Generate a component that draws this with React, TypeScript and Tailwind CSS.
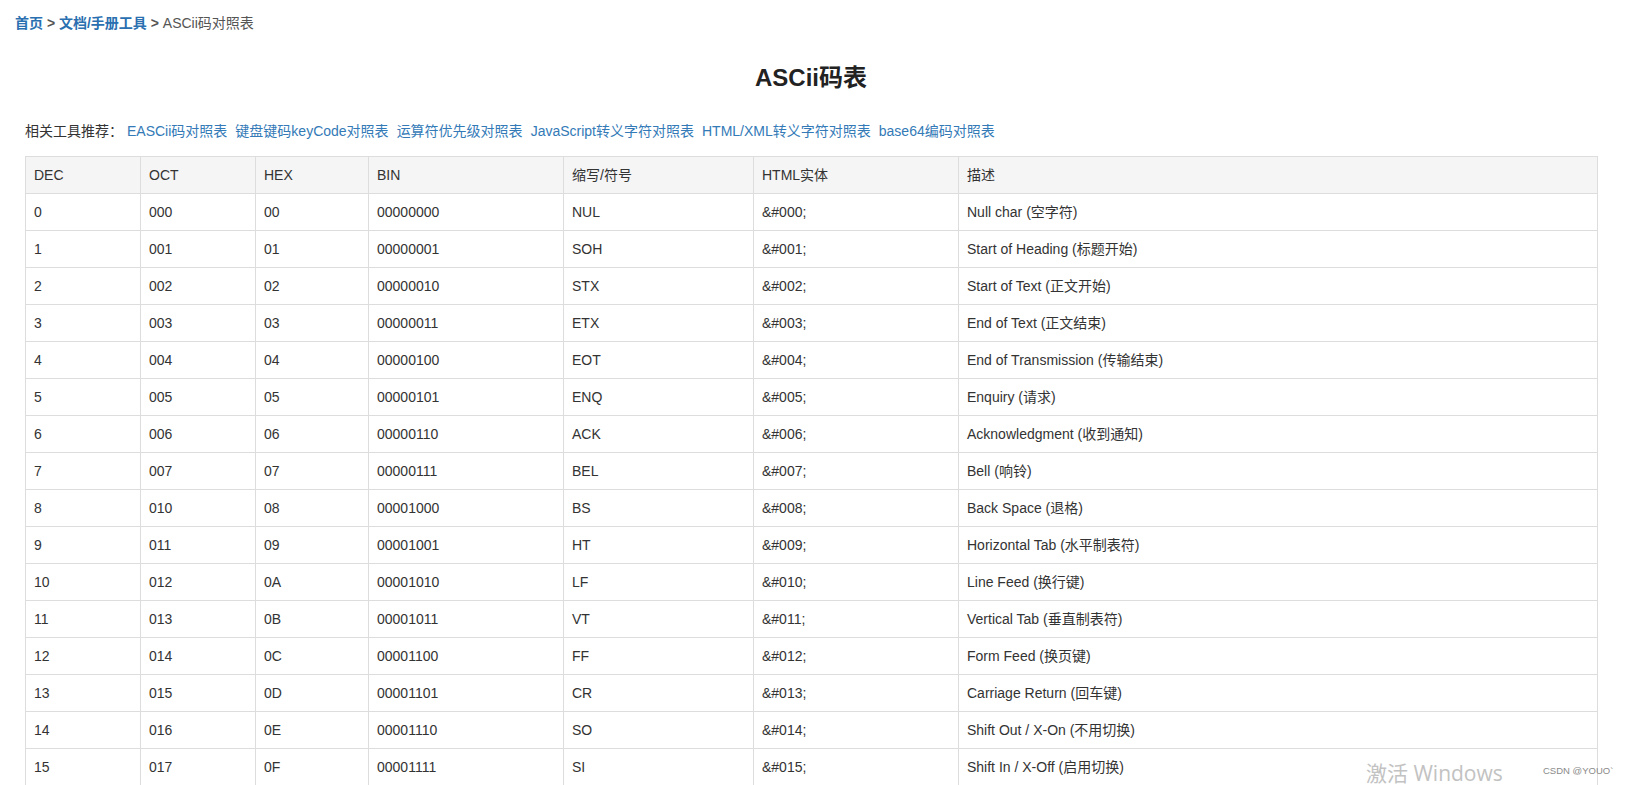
import React from 'react';

const descs = [
  'Null char (空字符)',
  'Start of Heading (标题开始)',
  'Start of Text (正文开始)',
  'End of Text (正文结束)',
  'End of Transmission (传输结束)',
  'Enquiry (请求)',
  'Acknowledgment (收到通知)',
  'Bell (响铃)',
  'Back Space (退格)',
  'Horizontal Tab (水平制表符)',
  'Line Feed (换行键)',
  'Vertical Tab (垂直制表符)',
  'Form Feed (换页键)',
  'Carriage Return (回车键)',
  'Shift Out / X-On (不用切换)',
  'Shift In / X-Off (启用切换)',
];

const abbrs = ['NUL', 'SOH', 'STX', 'ETX', 'EOT', 'ENQ', 'ACK', 'BEL', 'BS', 'HT', 'LF', 'VT', 'FF', 'CR', 'SO', 'SI'];

const rows = abbrs.map((abbr, i) => ({
  dec: String(i),
  oct: i.toString(8).padStart(3, '0'),
  hex: i.toString(16).toUpperCase().padStart(2, '0'),
  bin: i.toString(2).padStart(8, '0'),
  abbr,
  html: `&#${String(i).padStart(3, '0')};`,
  desc: descs[i],
}));

const tools = [
  'EASCii码对照表',
  '键盘键码keyCode对照表',
  '运算符优先级对照表',
  'JavaScript转义字符对照表',
  'HTML/XML转义字符对照表',
  'base64编码对照表',
];

const headers = ['DEC', 'OCT', 'HEX', 'BIN', '缩写/符号', 'HTML实体', '描述'];

const cell = 'border border-[#dddddd] px-[8px] py-[8px] leading-[20px] text-left align-top font-normal';

export default function App() {
  return (
    <div className="relative min-h-[785px] bg-white text-[14px] text-[#333333] font-['Liberation_Sans','Noto_Sans_CJK_SC',sans-serif]">
      {/* breadcrumb */}
      <div className="pl-[15px] pt-[13px] leading-[20px] h-[33px]">
        <a className="font-bold text-[#2a6fb0]">首页</a>
        <span className="font-bold text-[#555555]"> &gt; </span>
        <a className="font-bold text-[#2a6fb0]">文档/手册工具</a>
        <span className="font-bold text-[#555555]"> &gt; </span>
        <span className="text-[#555555]">ASCii码对照表</span>
      </div>

      <div className="ml-[25px] w-[1572px]">
        <h1 className="mt-[32px] text-center text-[24px] leading-[26px] font-bold text-[#222222]">ASCii码表</h1>

        <div className="mt-[30px] flex leading-[20px]">
          <span>相关工具推荐：</span>
          {tools.map((t) => (
            <a key={t} className="px-[4px] text-[#337ab7]">
              {t}
            </a>
          ))}
        </div>

        <table className="mt-[15px] w-[1572px] table-fixed border-collapse">
          <colgroup>
            <col className="w-[115px]" />
            <col className="w-[115px]" />
            <col className="w-[113px]" />
            <col className="w-[195px]" />
            <col className="w-[190px]" />
            <col className="w-[205px]" />
            <col className="w-[639px]" />
          </colgroup>
          <thead>
            <tr className="bg-[#f5f5f5]">
              {headers.map((h) => (
                <th key={h} className={cell}>
                  {h}
                </th>
              ))}
            </tr>
          </thead>
          <tbody>
            {rows.map((r) => (
              <tr key={r.dec}>
                <td className={cell}>{r.dec}</td>
                <td className={cell}>{r.oct}</td>
                <td className={cell}>{r.hex}</td>
                <td className={cell}>{r.bin}</td>
                <td className={cell}>{r.abbr}</td>
                <td className={cell}>{r.html}</td>
                <td className={cell}>{r.desc}</td>
              </tr>
            ))}
          </tbody>
        </table>
      </div>

      {/* screenshot watermarks */}
      <div className="absolute left-[1366px] top-[759px] text-[21px] leading-[28px] text-[#c2c2c2] font-['Open_Sans','Noto_Sans_CJK_SC',sans-serif]">
        激活 Windows
      </div>
      <div className="absolute left-[1543px] top-[765px] text-[9.5px] leading-[12px] text-[#8a8a8a]">CSDN @YOUO`</div>
    </div>
  );
}
